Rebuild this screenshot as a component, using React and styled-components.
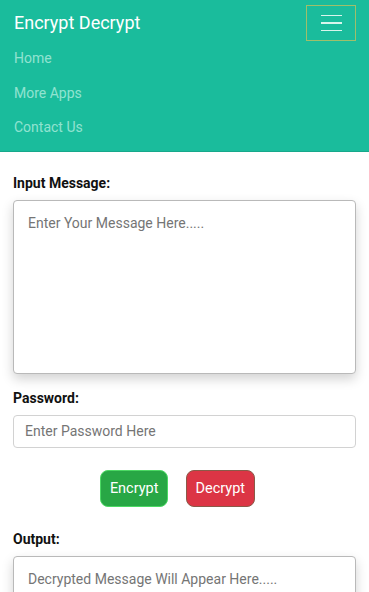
import React from 'react';
import styled, { createGlobalStyle } from 'styled-components';

const GlobalStyle = createGlobalStyle`
    * {
        box-sizing: border-box;
    }

    body {
        margin: 0;
        font-family: Roboto, "Liberation Sans", sans-serif;
        background: #fff;
        color: #111;
    }
`;

const Navbar = styled.nav`
    background: #1abc9c;
    padding: 5px 13px 6px 14px;
    border-bottom: 1px solid #17a88b;
`;

const NavTop = styled.div`
    display: flex;
    align-items: center;
    justify-content: space-between;
    height: 36px;
`;

const Brand = styled.span`
    font-size: 18px;
    color: #fff;
    margin-top: -2px;
`;

const Toggler = styled.button`
    width: 50px;
    height: 36px;
    background: transparent;
    border: 1px solid #9fbf6a;
    display: flex;
    flex-direction: column;
    align-items: center;
    justify-content: center;
    gap: 6px;
    padding: 0;

    span {
        display: block;
        width: 21px;
        height: 1.5px;
        background: #d8f5ec;
    }
`;

const NavLinks = styled.ul`
    list-style: none;
    margin: 0;
    padding: 0;
`;

const NavLink = styled.li`
    font-size: 14px;
    color: rgba(225, 255, 245, 0.6);
    height: 34.5px;
    line-height: 34.5px;
`;

const Main = styled.main`
    padding: 23px 13px 0 13px;
`;

const Label = styled.label`
    display: block;
    font-size: 14px;
    font-weight: 700;
    margin-bottom: 9px;
`;

const MessageBox = styled.textarea`
    display: block;
    width: 100%;
    height: ${p => p.$height}px;
    border: 1px solid #b9b9b9;
    border-radius: 4px;
    box-shadow: 0 5px 12px rgba(0, 0, 0, 0.18);
    padding: 14px 14px;
    font-family: inherit;
    font-size: 14px;
    resize: none;
    margin-bottom: 16px;

    ::placeholder {
        color: #757575;
    }
`;

const PasswordInput = styled.input`
    display: block;
    width: 100%;
    height: 33px;
    border: 1px solid #d2d2d2;
    border-radius: 4px;
    padding: 0 11px;
    font-family: inherit;
    font-size: 14px;

    ::placeholder {
        color: #666;
    }
`;

const Actions = styled.div`
    display: flex;
    justify-content: center;
    gap: 18px;
    padding: 22px 14px 24px 0;
`;

const ActionButton = styled.button`
    height: 37px;
    padding: 0 8.5px;
    border-radius: 8px;
    border: 1px solid ${p => p.$border};
    background: ${p => p.$bg};
    color: #fff;
    font-family: inherit;
    font-size: 14.5px;
`;

export default function App() {
    return (
        <>
            <GlobalStyle />
            <Navbar>
                <NavTop>
                    <Brand>Encrypt Decrypt</Brand>
                    <Toggler>
                        <span />
                        <span />
                        <span />
                    </Toggler>
                </NavTop>
                <NavLinks>
                    <NavLink>Home</NavLink>
                    <NavLink>More Apps</NavLink>
                    <NavLink>Contact Us</NavLink>
                </NavLinks>
            </Navbar>
            <Main>
                <Label>Input Message:</Label>
                <MessageBox $height={174} placeholder="Enter Your Message Here....." />
                <Label>Password:</Label>
                <PasswordInput placeholder="Enter Password Here" />
                <Actions>
                    <ActionButton $bg="#28a745" $border="#4cd964">Encrypt</ActionButton>
                    <ActionButton $bg="#dc3545" $border="#8a5a48">Decrypt</ActionButton>
                </Actions>
                <Label>Output:</Label>
                <MessageBox $height={120} placeholder="Decrypted Message Will Appear Here....." />
            </Main>
        </>
    );
}
